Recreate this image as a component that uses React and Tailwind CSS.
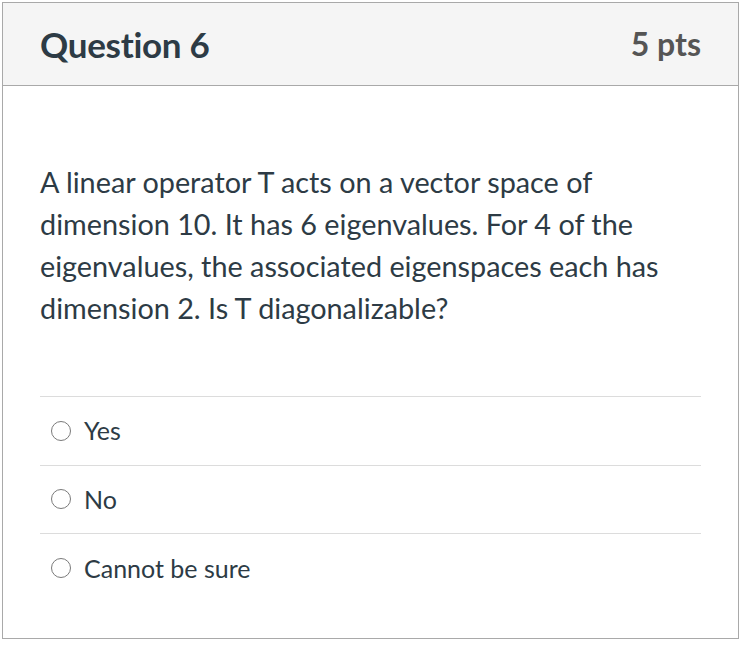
import { useState } from 'react';

const ANSWERS = ['Yes', 'No', 'Cannot be sure'];

const App = () => {
  const [picked, setPicked] = useState(null);

  return (
    <div className="min-h-screen bg-white pt-[2px] pl-[2px]" style={{ fontFamily: 'Lato, "Noto Sans", sans-serif' }}>
      <div className="w-[737px] h-[637px] border border-[#a9a9a9] flex flex-col text-[#2d3b45]">

        {/* Header */}
        <div className="h-[83px] bg-[#f5f5f5] border-b border-[#a9a9a9] flex items-center justify-between pl-[37px] pr-[37px]">
          <h2 className="text-[35px] font-bold tracking-[-0.3px]">Question 6</h2>
          <span className="text-[32px] font-bold text-[#555]">5 pts</span>
        </div>

        {/* Body */}
        <div className="px-[37px] pt-[75px]">
          <p className="text-[28.8px] leading-[42px]">
            A linear operator T acts on a vector space of dimension 10. It has 6 eigenvalues. For 4 of the eigenvalues, the associated eigenspaces each has dimension 2. Is T diagonalizable?
          </p>

          <div className="mt-[67px] border-t border-[#dcdcdc]">
            {ANSWERS.map((answer) => (
              <label
                key={answer}
                className="h-[68.5px] flex items-center gap-[13px] pl-[11px] border-b border-[#dcdcdc] last:border-b-0 cursor-pointer"
              >
                <span
                  onClick={() => setPicked(answer)}
                  className="w-[20px] h-[20px] rounded-full border-[1.5px] border-[#7a7a7a] flex items-center justify-center"
                >
                  {picked === answer && <span className="w-[10px] h-[10px] rounded-full bg-[#2d3b45]" />}
                </span>
                <span className="text-[25px]">{answer}</span>
              </label>
            ))}
          </div>
        </div>
      </div>
    </div>
  );
};

export default App;
